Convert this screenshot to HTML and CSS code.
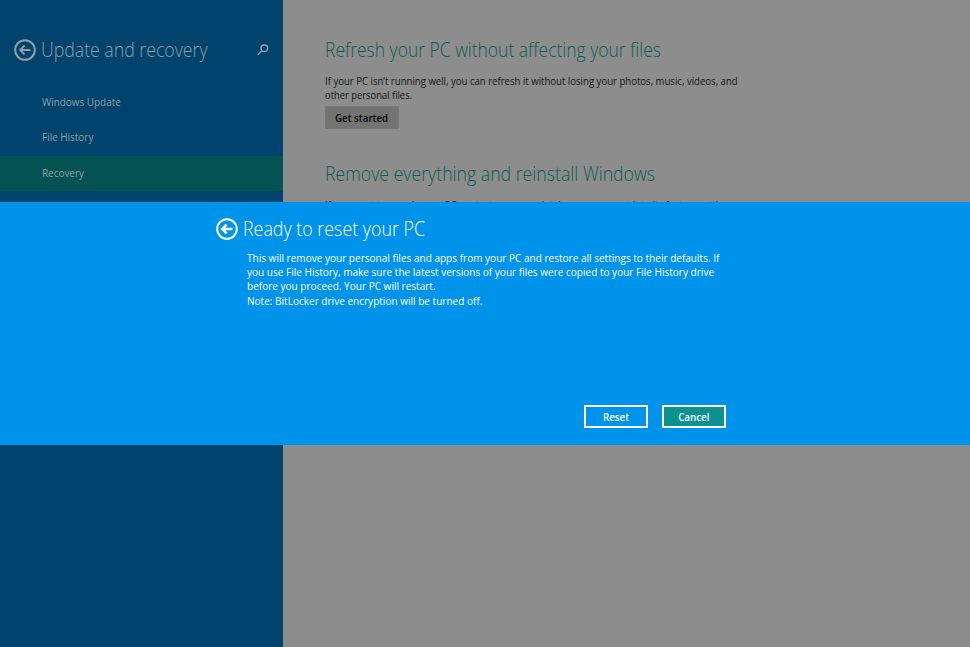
FILE: index.html
```
<!DOCTYPE html>
<html lang="en">
<head>
<meta charset="utf-8">
<title>Update and recovery</title>
<link rel="stylesheet" href="styles.css">
</head>
<body>
<div class="settings">
  <aside class="sidebar">
    <header class="side-head">
      <svg class="back" viewBox="0 0 22 22"><circle cx="11" cy="11" r="9.8"/><path d="M16.5 11H6.2M10.6 6.6L6.2 11l4.4 4.4"/></svg>
      <h1 class="title">Update and recovery</h1>
      <svg class="search" viewBox="0 0 12 12"><circle cx="7.3" cy="4.3" r="3.3"/><path d="M4.9 6.7L.9 10.7"/></svg>
    </header>
    <nav class="nav">
      <a class="item"><span>Windows Update</span></a>
      <a class="item"><span>File History</span></a>
      <a class="item active"><span>Recovery</span></a>
    </nav>
  </aside>
  <main class="content">
    <section class="block">
      <h2 class="heading refresh">Refresh your PC without affecting your files</h2>
      <p class="copy"><span class="line">If your PC isn’t running well, you can refresh it without losing your photos, music, videos, and</span><span class="line short">other personal files.</span></p>
      <button class="start"><span>Get started</span></button>
    </section>
    <section class="block">
      <h2 class="heading">Remove everything and reinstall Windows</h2>
      <p class="copy lower"><span class="line">If you want to recycle your PC or start over completely, you can reset it to its factory settings.</span></p>
    </section>
  </main>
</div>
<div class="dialog" role="dialog">
  <header class="dialog-head">
    <svg class="back" viewBox="0 0 22 22"><circle cx="11" cy="11" r="9.8"/><path stroke-width="2.5" d="M16.5 11H6.4M10.6 6.6L6.2 11l4.4 4.4"/></svg>
    <h2 class="dialog-title">Ready to reset your PC</h2>
  </header>
  <p class="message"><span class="line">This will remove your personal files and apps from your PC and restore all settings to their defaults. If</span><span class="line">you use File History, make sure the latest versions of your files were copied to your File History drive</span><span class="line">before you proceed. Your PC will restart.</span><span class="line">Note: BitLocker drive encryption will be turned off.</span></p>
  <footer class="actions">
    <button class="action"><span>Reset</span></button>
    <button class="action cancel"><span>Cancel</span></button>
  </footer>
</div>
</body>
</html>
```
FILE: styles.css
```
* { box-sizing: border-box; }
body {
  margin: 0;
  height: 647px;
  overflow: hidden;
  font: 10.5px/14px "Open Sans", "Noto Sans", sans-serif;
}
h1, h2, p { margin: 0; }
button { font: inherit; font-weight: 600; padding: 0; border-radius: 0; }
button span { display: inline-block; transform: scaleX(.93); }
svg { fill: none; flex: none; stroke: currentColor; stroke-width: 2; }
.settings { display: flex; height: 647px; background: #8d8d8d; }
.sidebar { width: 283px; background: #00446d; color: #929da4; }
.side-head { display: flex; align-items: center; height: 28px; margin-top: 35.5px; padding-left: 14px; }
.back { width: 22px; height: 22px; }
.title, .heading, .dialog-title {
  font-size: 19.5px;
  line-height: 28px;
  font-weight: 300;
  white-space: nowrap;
  transform-origin: left;
  transform: scaleX(.907);
}
.title { width: 216px; margin-left: 5px; }
.search { width: 12px; height: 12px; stroke-width: 1.5; }
.nav { margin-top: 21px; }
.item { display: flex; align-items: center; height: 35.5px; padding: 0 0 1px 41.5px; }
.item span { transform: scaleX(.945); transform-origin: left; }
.active { background: #055252; }
.content { padding: 36px 0 0 42px; color: #151515; }
.block { height: 124px; }
.heading { color: #0d5c5a; }
.refresh { transform: scaleX(.896); }
.copy { margin-top: 11px; line-height: 13.5px; }
.lower { margin-top: 11px; font-size: 10px; }
.line { display: block; white-space: nowrap; transform-origin: left; }
.copy .line { transform: scaleX(.912); }
.lower .line { transform: scaleX(.957); }
.copy .short { transform: scaleX(.893); }
.start { display: block; width: 74px; height: 23px; margin-top: 4px; border: 1px solid #777; background: #737373; color: #050505; }
.dialog {
  position: absolute;
  top: 202px;
  left: 0;
  width: 100%;
  height: 243px;
  padding: 13px 244px 0 216px;
  background: #0093eb;
  color: #fff;
}
.dialog-head { display: flex; align-items: center; gap: 5px; height: 28px; }
.dialog-title { transform: scaleX(.915); }
.message { height: 58px; margin: 7.5px 0 0 30.5px; line-height: 14.4px; }
.message .line { transform: scaleX(.956); }
.actions { display: flex; justify-content: flex-end; gap: 14px; margin-top: 96.5px; }
.action { width: 64px; height: 23px; border: 2px solid #fff; background: #0093eb; color: #fff; }
.cancel { background: #0b9190; }
```
